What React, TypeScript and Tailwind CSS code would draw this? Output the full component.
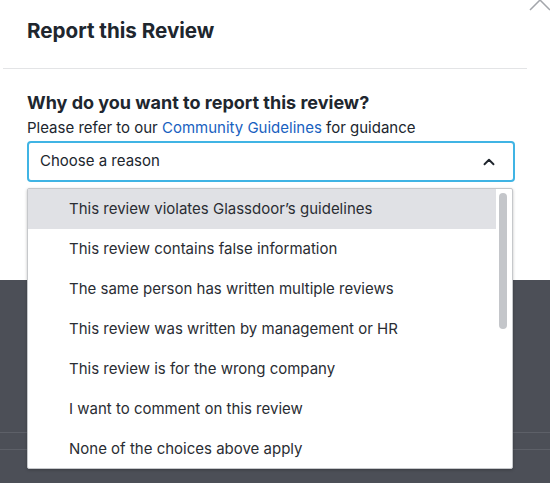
import { ChevronUp } from "lucide-react";

const reasons = [
  "This review violates Glassdoor\u2019s guidelines",
  "This review contains false information",
  "The same person has written multiple reviews",
  "This review was written by management or HR",
  "This review is for the wrong company",
  "I want to comment on this review",
  "None of the choices above apply",
];

export default function App() {
  return (
    <div
      className="relative w-[550px] h-[483px] overflow-hidden bg-[#4c4f57] text-[#20262e]"
      style={{ fontFamily: "Inter, 'Noto Sans', sans-serif" }}
    >
      {/* modal */}
      <div className="relative h-[280px] bg-white">
        <svg
          className="absolute right-[-2px] top-[-12px] text-[#a3a6ab]"
          width="24"
          height="24"
          viewBox="0 0 24 24"
          fill="none"
          stroke="currentColor"
          strokeWidth="1.5"
        >
          <path d="M2 2l20 20M22 2L2 22" />
        </svg>
        <div className="px-[27px] pt-[19px] pb-[25px]">
          <h2 className="text-[20.6px] leading-[24px] font-bold">Report this Review</h2>
        </div>
        <div className="mx-[3px] mr-[23px] h-px bg-[#e3e4e6]" />
        <div className="px-[27px] pt-[22px]">
          <p className="text-[18px] leading-[24px] font-bold">Why do you want to report this review?</p>
          <p className="text-[15px] leading-[20px] mt-[3px]">
            Please refer to our <span className="text-[#1861bf]">Community Guidelines</span> for guidance
          </p>
          <div className="mt-[3px] flex h-[41px] w-[488px] items-center justify-between rounded-[4px] border-2 border-[#40b4e4] pl-[11px] pr-[15px]">
            <span className="text-[15px]">Choose a reason</span>
            <ChevronUp className="h-[18px] w-[18px]" strokeWidth={2.5} />
          </div>
        </div>
      </div>

      {/* background page lines */}
      <div className="absolute left-0 right-0 top-[432px] h-px bg-[#5d6068]" />
      <div className="absolute left-0 right-0 top-[449px] h-px bg-[#5d6068]" />

      {/* dropdown list */}
      <div className="absolute left-[27px] top-[188px] flex h-[281px] w-[486px] rounded-[2px] border border-[#c6c8cb] bg-white shadow-[0_1px_3px_rgba(0,0,0,0.25)]">
        <ul className="flex-1">
          {reasons.map((r, i) => (
            <li
              key={r}
              className={`flex h-[40px] items-center pl-[41px] text-[15px] text-[#2a2d33] ${
                i === 0 ? "bg-[#e0e1e5]" : ""
              }`}
            >
              {r}
            </li>
          ))}
        </ul>
        <div className="w-[16px] pt-[4px] pl-[3px]">
          <div className="h-[136px] w-[8px] rounded-full bg-[#c4c6ca]" />
        </div>
      </div>
    </div>
  );
}
